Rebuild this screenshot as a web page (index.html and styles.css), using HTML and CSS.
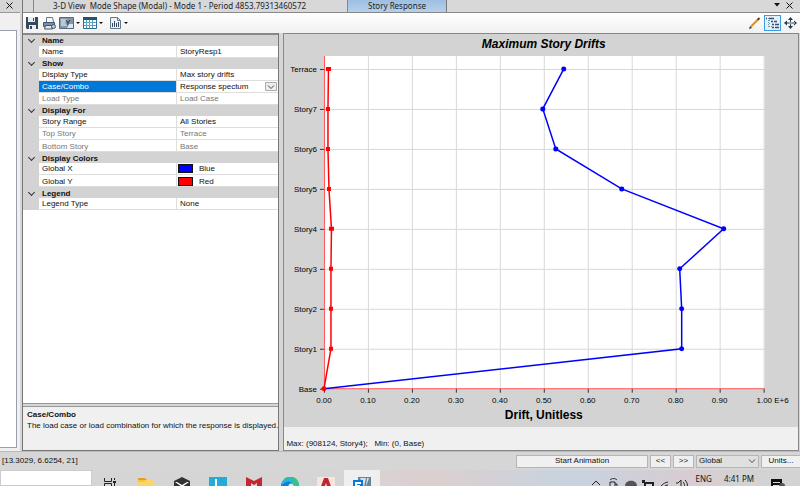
FILE: index.html
```html
<!DOCTYPE html>
<html lang="en">
<head>
<meta charset="UTF-8">
<meta name="viewport" content="width=device-width, initial-scale=1.0">
<title>Story Response</title>
<link rel="stylesheet" href="styles.css">
</head>
<body>

<div class="work">
<aside class="dock">
<div class="dock-head"><button class="close" aria-label="Close"><svg width="7" height="7" viewBox="0 0 7 7"><path d="M.5.5l6 6M6.500.5l-6 6"/></svg></button></div>
<div class="dock-body"></div>
</aside>

<main class="main">
<nav class="tabs">
<a class="tab" href="#view">3-D View&nbsp; Mode Shape (Modal) - Mode 1 - Period 4853.79313460572</a>
<a class="tab active" href="#response">Story Response</a>
<span class="tab-end">
<button class="close" aria-label="Tab list"><svg width="6" height="4" viewBox="0 0 6 4"><path class="fill" d="M0 0h6l-3 3.500z"/></svg></button>
<button class="close" aria-label="Close tab"><svg width="7" height="7" viewBox="0 0 7 7"><path d="M.5.5l6 6M6.500.5l-6 6"/></svg></button>
</span>
</nav>

<div class="toolbar">
<button class="tool" aria-label="Save"><svg width="14" height="14" viewBox="0 0 14 14"><path fill="#34495f" d="M1 1h12v12H2l-1-1z"/><path fill="#e8eef4" d="M3 1h7v5H3zM4 9h7v4H4z"/><path fill="#34495f" d="M8 2h1v3H8zM5 10h2v3H5z"/></svg></button>
<button class="tool" aria-label="Print"><svg width="14" height="14" viewBox="0 0 14 14"><path fill="#f4f7fa" stroke="#65788c" d="M4.500 6V1.500h6l1 4.500"/><path fill="#7b90a5" stroke="#42566b" d="M1.500 6.500h11v4h-11z"/><path fill="#dfe8f0" stroke="#42566b" d="M3.500 9.500h6l1 3.500h-8z"/><circle cx="11.500" cy="10.500" r="2" fill="#b9cbdc" stroke="#42566b"/></svg></button>
<button class="tool" aria-label="Picture"><svg width="15" height="14" viewBox="0 0 15 14"><path fill="#8496a8" stroke="#566a7e" d="M.5 1.500h14v11H.500z"/><path fill="#b9c9d8" d="M2 3h6L6 7l3 3H2z"/><path fill="none" stroke="#24384d" d="M7 4l2 3 2-3M9 7v3"/><path fill="#dce6ef" d="M10 8h4v4H8z"/></svg></button><span class="caret"></span>
<button class="tool" aria-label="Table"><svg width="14" height="14" viewBox="0 0 14 14"><path fill="#fff" stroke="#2c6f92" d="M.5 1.500h13v11H.500z"/><path fill="#24536f" d="M0 1h14v3H0z"/><path fill="none" stroke="#58a4c4" d="M1 6.500h12M1 9.500h12M3.500 4v8M6.500 4v8M9.500 4v8"/></svg></button><span class="caret"></span>
<button class="tool report-tool" aria-label="Report"><svg width="13" height="14" viewBox="0 0 13 14"><path fill="#edf2f6" stroke="#64788c" d="M1.500 1.500h7l3 3v8h-10z"/><path fill="none" stroke="#64788c" d="M8.500 1.500v3h3"/><path fill="#34495f" d="M3 7h1v4H3zM5 5h1v6H5zM7 7h1v4H7zM9 6h1v5H9z"/></svg></button><span class="caret"></span>
<span class="spacer"></span>
<button class="tool" aria-label="Edit"><svg width="13" height="14" viewBox="0 0 13 14"><path stroke="#e98a16" stroke-width="2" d="M3 10.500L9.500 4"/><path stroke="#6b3a1c" stroke-width="2" d="M9.500 4l2-2"/><path fill="#333" d="M1 13l1-3 2 2z"/></svg></button>
<button class="tool on" aria-label="Show tree"><svg width="15" height="14" viewBox="0 0 15 14"><path fill="none" stroke="#7d95ab" stroke-dasharray="1 1" d="M3.500 2v9M4 4.500h2M4 7.500h2M4 10.500h3"/><path stroke="#3c5166" stroke-width="1.500" d="M1 2.500h1M4 2.500h5M6 5.500h2M9 5.500h3M7 8.500h2M10 8.500h4M7 11.500h2M10 11.500h4"/></svg></button>
<button class="tool" aria-label="Move"><svg width="13" height="14" viewBox="0 0 13 14"><path fill="#24384d" d="M6.500 1l2.500 3H4zM6.500 13L4 10h5zM0 7l3-2.500v5zM13 7l-3-2.500v5zM6 3h1v3H6zM6 8h1v3H6zM2 6.500h3v1H2zM8 6.500h3v1H8z"/><circle cx="6.500" cy="7" r="1.500" fill="#8d9cab"/></svg></button>
</div>

<div class="panes">
<section class="props">
<div class="grid">
<table>
<tr class="head"><th class="arrow"></th><th class="name">Name</th><th></th></tr>
<tr><td class="gut"></td><td>Name</td><td>StoryResp1</td></tr>
<tr class="head"><th class="arrow"></th><th colspan="2">Show</th></tr>
<tr><td class="gut"></td><td>Display Type</td><td>Max story drifts</td></tr>
<tr class="sel"><td class="gut"></td><td><label for="combo">Case/Combo</label></td><td><select id="combo"><option>Response spectum</option></select></td></tr>
<tr class="off"><td class="gut"></td><td>Load Type</td><td>Load Case</td></tr>
<tr class="head"><th class="arrow"></th><th colspan="2">Display For</th></tr>
<tr><td class="gut"></td><td>Story Range</td><td>All Stories</td></tr>
<tr class="off"><td class="gut"></td><td>Top Story</td><td>Terrace</td></tr>
<tr class="off"><td class="gut"></td><td>Bottom Story</td><td>Base</td></tr>
<tr class="head"><th class="arrow"></th><th colspan="2">Display Colors</th></tr>
<tr><td class="gut"></td><td>Global X</td><td><span class="color"><i class="blue"></i>Blue</span></td></tr>
<tr><td class="gut"></td><td>Global Y</td><td><span class="color"><i class="red"></i>Red</span></td></tr>
<tr class="head"><th class="arrow"></th><th colspan="2">Legend</th></tr>
<tr><td class="gut"></td><td>Legend Type</td><td>None</td></tr>
</table>
</div>
<div class="help">
<b>Case/Combo</b>
<p>The load case or load combination for which the response is displayed.</p>
</div>
</section>

<section class="chart">
<div class="plot">
<svg viewBox="0 0 514 393" preserveAspectRatio="xMidYMin meet">
<text class="title" x="260" y="14">Maximum Story Drifts</text>
<!-- origin of the group is the Base / 0.00 corner -->
<g transform="translate(40,355)">
<rect class="area" x="0" y="-333" width="441" height="333"/>
<path class="lines" d="M44.500-333V0M88.500-333V0M132.500-333V0M176.500-333V0M220.500-333V0M264.500-333V0M308.500-333V0M352.500-333V0M396.500-333V0M440.500-333V0"/>
<path class="lines" d="M0-319.500h441M0-279.500h441M0-239.500h441M0-199.500h441M0-159.500h441M0-119.500h441M0-79.500h441M0-39.500h441"/>
<path class="ticks" d="M-4-319.500h4M-4-279.500h4M-4-239.500h4M-4-199.500h4M-4-159.500h4M-4-119.500h4M-4-79.500h4M-4-39.500h4M-4 .500h4"/>
<path class="ticks" d="M.500 0v4M44.500 0v4M88.500 0v4M132.500 0v4M176.500 0v4M220.500 0v4M264.500 0v4M308.500 0v4M352.500 0v4M396.500 0v4M440.500 0v4"/>
<path class="axis" d="M.500-333V0H441"/>
<g class="ylab">
<text x="-7" y="-317">Terrace</text>
<text x="-7" y="-277">Story7</text>
<text x="-7" y="-237">Story6</text>
<text x="-7" y="-197">Story5</text>
<text x="-7" y="-157">Story4</text>
<text x="-7" y="-117">Story3</text>
<text x="-7" y="-77">Story2</text>
<text x="-7" y="-37">Story1</text>
<text x="-7" y="3">Base</text>
</g>
<g class="xlab">
<text x="0" y="14">0.00</text>
<text x="44" y="14">0.10</text>
<text x="88" y="14">0.20</text>
<text x="132" y="14">0.30</text>
<text x="176" y="14">0.40</text>
<text x="220" y="14">0.50</text>
<text x="264" y="14">0.60</text>
<text x="308" y="14">0.70</text>
<text x="352" y="14">0.80</text>
<text x="396" y="14">0.90</text>
<text x="449" y="14">1.00 E+6</text>
</g>
<polyline class="bline" points="0,0 358,-40 358,-80 356,-120 400,-160 298,-200 232,-240 219,-280 240,-320"/>
<g fill="#00f">
<circle cx="358" cy="-40" r="2.500"/><circle cx="358" cy="-80" r="2.500"/><circle cx="356" cy="-120" r="2.500"/><circle cx="400" cy="-160" r="2.500"/>
<circle cx="298" cy="-200" r="2.500"/><circle cx="232" cy="-240" r="2.500"/><circle cx="219" cy="-280" r="2.500"/><circle cx="240" cy="-320" r="2.500"/>
</g>
<polyline class="rline" points="0,0 7,-40 7,-80 7,-120 7.500,-160 5,-200 4,-240 4,-280 4.500,-320"/>
<path fill="red" d="M5-42h4v4H5zM5-82h4v4H5zM5-122h4v4H5zM5-162h5v4H5zM3-202h4v4H3zM2-242h4v4H2zM2-282h4v4H2zM2-322h5v4H2z"/>
<circle cx="0" cy="0" r="2.500" fill="red"/>
</g>
<text class="xtitle" x="260" y="385">Drift, Unitless</text>
</svg>
</div>
<div class="range">Max: (908124, Story4);&nbsp;&nbsp; Min: (0, Base)</div>
</section>
</div>
</main>
</div>

<footer class="status">
<span class="coords">[13.3029, 6.6254, 21]</span>
<button class="anim">Start Animation</button>
<button class="step">&lt;&lt;</button>
<button class="step">&gt;&gt;</button>
<select class="csys" aria-label="Coordinate system"><option>Global</option></select>
<button class="units">Units...</button>
</footer>

<div class="taskbar">
<input class="search" type="text" aria-label="Search">
<div class="apps">
<button class="app" aria-label="Task view"><svg width="18" height="16" viewBox="0 0 18 16"><path fill="none" stroke="#222" d="M3.500 1v3.500h7V1M3.500 9V6.500h7V9M13.500 1v2M13.500 5v10"/><path fill="#222" d="M12 4h3v2h-3z"/></svg></button>
<button class="app" aria-label="Files"><svg width="18" height="16" viewBox="0 0 18 16"><path fill="#e0a021" d="M1 1h7l2 2H1z"/><path fill="#fbd667" d="M1 3h15v12H1z"/><path fill="#f5c443" d="M1 3h8l-2 2H1z"/></svg></button>
<button class="app" aria-label="Mail"><svg width="18" height="16" viewBox="0 0 18 16"><path fill="#333" d="M9 0l8 4v12H1V4z"/><path fill="#fff" d="M2 5h14l-7 5z"/><path fill="#333" d="M4 5h10L9 8z"/></svg></button>
<button class="app" aria-label="L"><svg width="18" height="16" viewBox="0 0 18 16"><path fill="#22acd8" d="M0-1h18v17H0z"/><path fill="none" stroke="#fff" stroke-width="2" d="M7 2v8h5"/></svg></button>
<button class="app" aria-label="Antivirus"><svg width="18" height="16" viewBox="0 0 18 16"><path fill="#c32731" d="M1 0l8 4 8-4v14l-5 2V6L9 8 6 6v10l-5-2z"/></svg></button>
<button class="app" aria-label="Browser"><svg width="18" height="18" viewBox="0 0 18 18"><circle cx="9" cy="9" r="9" fill="#137fce"/><path fill="#36c38b" d="M3 2c5-5 15-2 15 6 0 3-4 4-6 2 1-5-5-7-9-5z"/><path fill="#27b5df" d="M1 5c4-6 11-4 12 1-4-3-8-2-12 2z"/><circle cx="10" cy="9" r="2.500" fill="#d8ecf5"/></svg></button>
<button class="app" aria-label="CAD"><svg width="18" height="16" viewBox="0 0 18 16"><path fill="#f7e5de" d="M0-1h18v17H0z"/><path fill="#c22530" d="M7 1h4l5 14h-4L9 6l-3 9H2zM7 9h5v2H6z"/></svg></button>
<button class="app current" aria-label="Structural model"><svg width="18" height="16" viewBox="0 0 18 16"><path fill="#6b8296" d="M5-1h13v12H5z"/><path fill="#d5e0e8" d="M7 1l4 9 2-9zM14 1l2 0-3 9z"/><path fill="#0a78d4" d="M0 3h10v12H0z"/><path fill="none" stroke="#fff" stroke-width="2" d="M8 6H3v8M3 9h4"/></svg></button>
</div>
<div class="tray">
<svg width="100" height="12" viewBox="0 0 100 12"><g fill="none" stroke="#222"><path d="M3 7l4-4 4 4"/><path d="M21 4h5v8h-5zM26 6h2v3h-2M21 2c2-2 5-2 7 0"/><path d="M71 12c0-4 3-7 8-8M74 12c0-3 2-5 5-5M77 12l2-2"/><path d="M87 5h2l3-3v10M94 4c2 2 2 5 0 7M96 2c3 3 3 7 1 10"/></g><path fill="#555" d="M36 8c0-7 12-7 12 0v4H36z"/><path fill="#222" d="M53 2h3v3h-3zM55 4h10v8H55z"/><path fill="#ddd" d="M57 6h6v3h-6z"/></svg>
<span class="lang">ENG</span>
<span class="clock">4:41 PM</span>
<svg class="note" width="14" height="12" viewBox="0 0 14 12"><path fill="#111" d="M0 1h11v11H0z"/><path stroke="#ddd" d="M2 4.500h7M2 7.500h7"/><circle cx="11" cy="8" r="3" fill="#555"/></svg>
</div>
</div>

</body>
</html>
```

FILE: styles.css
```css
*{
box-sizing: border-box;
}

body{
margin: 0;
height: 100vh;
display: flex;
flex-direction: column;
overflow: hidden;
background: #d6d6d6;
color: #111;
font-family: "Liberation Sans", Arial, sans-serif;
font-size: 8px;
line-height: 10px;
}

button, select, input{
font: inherit;
color: inherit;
margin: 0;
padding: 0;
border: 0;
border-radius: 0;
background: none;
}

svg{
display: block;
}

.work{
flex: 1;
min-height: 0;
display: flex;
}

/* left dock */
.dock{
width: 22px;
display: flex;
flex-direction: column;
background: #f0f0f0;
border-right: 2px solid #d6d6d6;
}

.dock-head{
height: 13px;
padding: 2px 6px;
background: #d6d6d6;
border-bottom: 1px solid #999;
}

.dock-body{
flex: 1;
margin: 17px 3px 3px 0;
background: #fff;
border: 1px solid #9a9fb0;
border-left: 0;
}

.close{
display: block;
}

.close path{
fill: none;
stroke: #111;
stroke-width: 1;
}

.close .fill{
fill: #111;
stroke: none;
}

/* tabs and toolbar */
.main{
flex: 1;
min-width: 0;
display: flex;
flex-direction: column;
border-left: 1px solid #777;
}

.tabs{
height: 13px;
display: flex;
padding-left: 10px;
border-bottom: 1px solid #888;
font-family: "Noto Sans", "Open Sans", sans-serif;
line-height: 11px;
background: #d8d8d8;
}

.tab{
padding: 0 41px 0 19px;
border-left: 1px solid #888;
color: #222;
text-decoration: none;
white-space: nowrap;
}

.tab.active{
padding: 0 20px;
border-right: 1px solid #777;
background: linear-gradient(#9dbfe2, #b5d0ec);
}

.tab-end{
margin-left: auto;
padding: 0 7px 2px 0;
display: flex;
align-items: center;
gap: 6px;
}

.toolbar{
height: 20px;
display: flex;
align-items: center;
padding: 0 3px 0 2px;
gap: 3px;
background: linear-gradient(#fff, #f1f1f1);
}

.tool{
display: flex;
}

.tool.on{
border: 1px solid #3b9be0;
background: #e2f0fb;
}

.report-tool{
margin-left: 3px;
}

.caret{
border: 2px solid transparent;
border-top-color: #111;
border-bottom: 0;
margin-left: -1px;
}

.spacer{
flex: 1;
}

.panes{
flex: 1;
min-height: 0;
display: flex;
gap: 4px;
}

/* property grid */
.props{
width: 33%;
display: flex;
flex-direction: column;
gap: 2px;
border-right: 1px solid #777;
border-bottom: 1px solid #777;
}

.grid{
flex: 1;
background: #fff;
border-top: 2px solid #888;
border-bottom: 1px solid #999;
}

.grid table{
width: 100%;
height: 175px;
table-layout: fixed;
border-spacing: 0;
line-height: 9px;
}

.grid th, .grid td{
padding: 1px 3px 0;
text-align: left;
white-space: nowrap;
}

.grid td{
border-right: 1px solid #ddd;
border-bottom: 1px solid #ddd;
}

.grid td:last-child{
border-right: 0;
}

.head, .grid .gut{
background: #d3d3d3;
}

.grid .gut{
border: 0;
}

.grid .arrow{
width: 16px;
}

.grid .name{
width: 138px;
}

.arrow::before{
content: "";
display: block;
width: 4px;
height: 4px;
margin: 0 auto 2px;
border: solid #333;
border-width: 0 1px 1px 0;
transform: rotate(45deg);
}

.off{
color: #777;
}

.sel td:nth-child(2){
background: #0078d7;
color: #fff;
}

.grid .sel td:last-child{
padding-right: 1px;
}

select{
appearance: none;
display: block;
width: 100%;
background: url("data:image/svg+xml,%3Csvg xmlns='http://www.w3.org/2000/svg' width='12' height='10'%3E%3Cpath d='M3 3.500l3 3 3-3' fill='none' stroke='%23444'/%3E%3C/svg%3E") no-repeat right center;
}

#combo{
height: 9px;
line-height: 9px;
background-image: url("data:image/svg+xml,%3Csvg xmlns='http://www.w3.org/2000/svg' width='12' height='9'%3E%3Cpath d='M.5.5h11v8H.5z' fill='%23eee' stroke='%23aaa'/%3E%3Cpath d='M3 3.500l3 3 3-3' fill='none' stroke='%23444'/%3E%3C/svg%3E");
}

.color{
display: flex;
align-items: center;
gap: 6px;
}

.color i{
width: 15px;
height: 9px;
margin-left: -2px;
border: 1px solid #111;
}

.blue{background: #00f;}
.red{background: #f00;}

.help{
height: 44px;
padding: 3px 4px;
background: #f0f0f0;
border-top: 1px solid #999;
}

.help p{
margin: 1px 0 0;
white-space: nowrap;
}

/* chart */
.chart{
flex: 1;
min-width: 0;
display: flex;
flex-direction: column;
margin-right: 1px;
background: #f0f0f0;
border: 1px solid #888;
}

.plot{
flex: 1;
min-height: 0;
background: #d3d3d3;
}

.plot svg{
width: 100%;
height: 100%;
}

.title, .xtitle{
font-size: 12px;
font-weight: bold;
text-anchor: middle;
}

.title{font-style: italic;}
.ylab{text-anchor: end;}
.xlab{text-anchor: middle;}
.area{fill: #fff;}

.lines, .ticks, .axis, .bline, .rline{
fill: none;
}

.lines{stroke: #d8d8d8;}
.ticks{stroke: #333;}
.axis{stroke: #f55;}
.bline{stroke: #00f; stroke-width: 1.5;}
.rline{stroke: #f00; stroke-width: 1.5;}

.range{
height: 23px;
padding: 12px 2px 0;
}

/* status bar */
.status{
height: 19px;
display: flex;
align-items: center;
gap: 2px;
padding-left: 2px;
border-top: 1px solid #bbb;
background: #d6d6d6;
}

.coords{
flex: 1;
}

.status button, .csys{
height: 13px;
background-color: #f0f0f0;
border: 1px solid #b5b5b5;
}

.anim{width: 132px;}
.step{width: 21px;}
.status .units{
width: 39px;
border-right: 0;
}

.csys{
width: 63px;
padding-left: 2px;
background-color: #e0e0e0;
}

/* taskbar */
.taskbar{
height: 16px;
display: flex;
overflow: hidden;
background: linear-gradient(90deg, #d5d5d5 40%, #dccfd0 54%, #c7d3df 72%, #d8ccd2 86%, #d3d3d3 93%);
}

.search{
width: 92px;
background: #fff;
border: 1px solid #ccc;
}

.apps{
display: flex;
}

.app{
width: 36px;
padding: 7px 9px 0;
align-self: flex-start;
}

.app.current{
background: #efefef;
}

.tray{
flex: 1;
display: flex;
justify-content: flex-end;
align-items: flex-start;
padding: 4px 15px 0 0;
font-family: "Noto Sans", "Open Sans", sans-serif;
}

.tray svg{
margin-top: 4px;
}

.lang{
margin: 0 12px 0 7px;
}

.clock{
margin-right: 17px;
}
```
